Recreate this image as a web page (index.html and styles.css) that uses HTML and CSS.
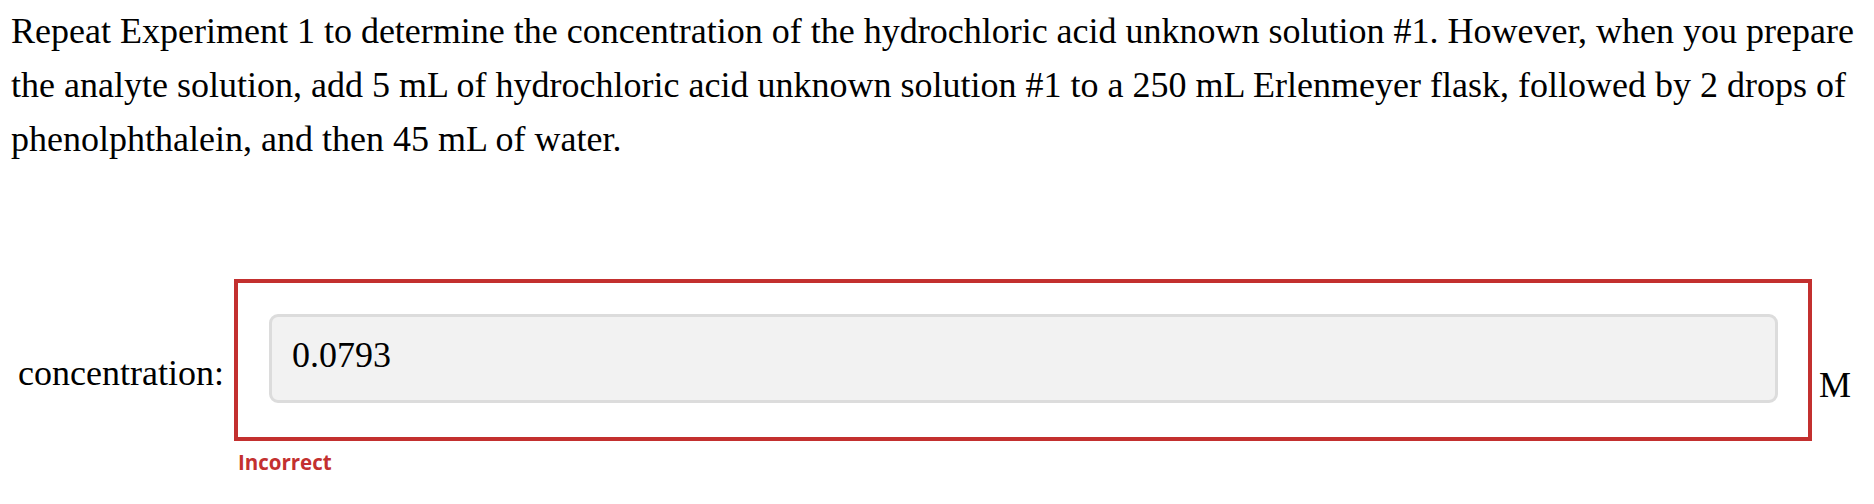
FILE: index.html
```html
<!DOCTYPE html>
<html>
<head>
<meta charset="utf-8">
<link rel="stylesheet" href="styles.css">
</head>
<body>
<div class="page">
  <p class="question">Repeat Experiment 1 to determine the concentration of the hydrochloric acid unknown solution #1. However, when you prepare the analyte solution, add 5 mL of hydrochloric acid unknown solution #1 to a 250 mL Erlenmeyer flask, followed by 2 drops of phenolphthalein, and then 45 mL of water.</p>
  <div class="answer-row">
    <span class="label">concentration:</span>
    <div class="field">
      <div class="box">
        <div class="input">0.0793</div>
      </div>
      <div class="feedback">Incorrect</div>
    </div>
    <span class="unit">M</span>
  </div>
</div>
</body>
</html>
```
FILE: styles.css
```css
html, body {
  margin: 0;
  padding: 0;
  background: #ffffff;
}
.page {
  padding: 4px 10px 0 11px;
  font-family: "Liberation Serif", "Times New Roman", serif;
  color: #000;
}
.question {
  margin: 0;
  font-size: 36px;
  line-height: 54px;
}
.answer-row {
  display: flex;
  align-items: flex-start;
  margin-top: 113px;
  padding-left: 7px;
  padding-right: 13px;
}
.label {
  font-size: 36px;
  line-height: 40px;
  padding-top: 74px;
  width: 216px;
  flex: none;
}
.field {
  flex: 1;
  display: flex;
  flex-direction: column;
}
.box {
  border: 4px solid #c3302f;
  padding: 31px 30px 34px 31px;
}
.input {
  border: 3px solid #dcdcdc;
  border-radius: 9px;
  background: #f2f2f2;
  box-sizing: border-box;
  height: 89px;
  padding: 0 20px;
  display: flex;
  align-items: center;
  font-size: 36px;
  padding-bottom: 8px;
}
.feedback {
  margin-top: 7px;
  padding-left: 4px;
  font-family: "Open Sans", sans-serif;
  font-weight: 700;
  font-size: 20.5px;
  color: #c3302f;
}
.unit {
  font-size: 36px;
  line-height: 40px;
  padding-top: 86px;
  margin-left: 7px;
  flex: none;
}
```
